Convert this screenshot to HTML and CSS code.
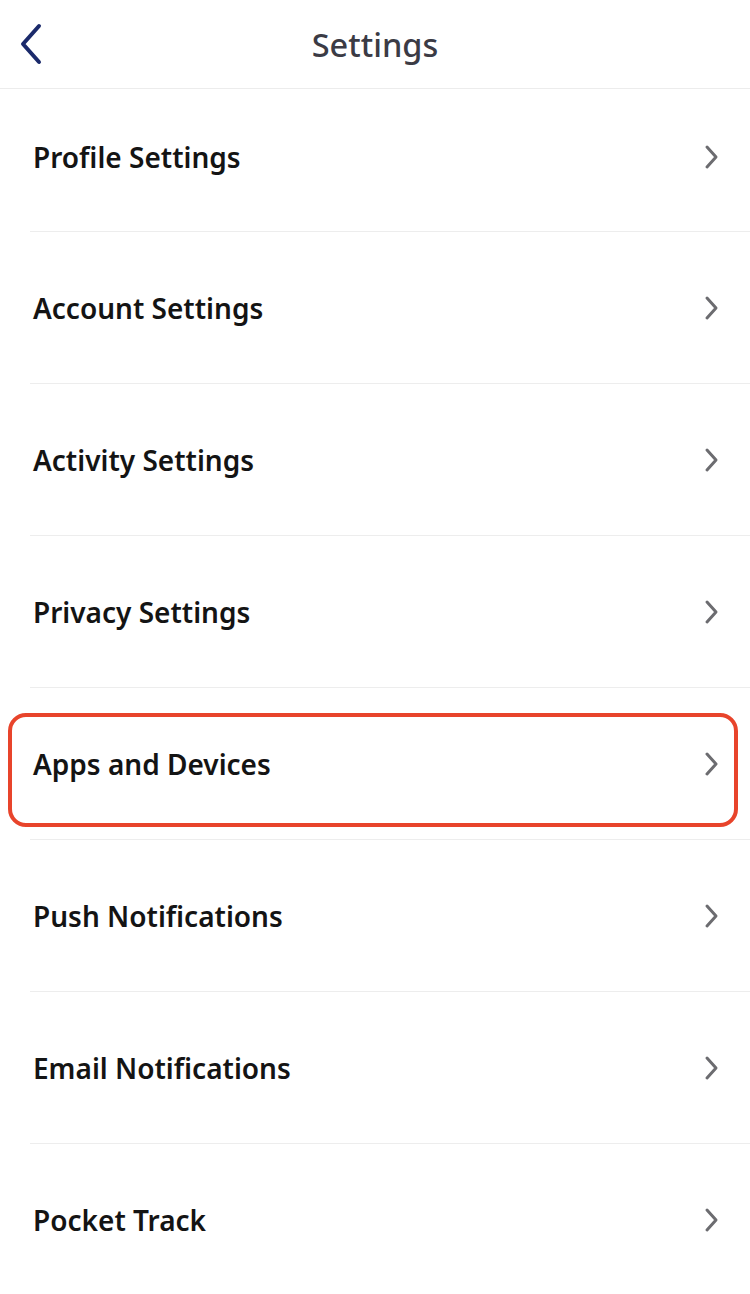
FILE: index.html
```html
<!DOCTYPE html>
<html lang="en">
<head>
<meta charset="utf-8">
<title>Settings</title>
<link rel="stylesheet" href="styles.css">
</head>
<body>
<div class="screen">
  <header class="topbar">
    <button class="back" aria-label="Back">
      <svg width="28" height="44" viewBox="0 0 28 44"><path d="M23 4 L7 22 L23 40" fill="none" stroke="#1b2a6b" stroke-width="4" stroke-linecap="round" stroke-linejoin="round"/></svg>
    </button>
    <h1 class="title">Settings</h1>
  </header>
  <ul class="list">
    <li class="row"><span class="label">Profile Settings</span><svg class="chev" width="16" height="26" viewBox="0 0 16 26"><path d="M3 3 L12 13 L3 23" fill="none" stroke="#6c6c70" stroke-width="3" stroke-linecap="round" stroke-linejoin="round"/></svg></li>
    <li class="row"><span class="label">Account Settings</span><svg class="chev" width="16" height="26" viewBox="0 0 16 26"><path d="M3 3 L12 13 L3 23" fill="none" stroke="#6c6c70" stroke-width="3" stroke-linecap="round" stroke-linejoin="round"/></svg></li>
    <li class="row"><span class="label">Activity Settings</span><svg class="chev" width="16" height="26" viewBox="0 0 16 26"><path d="M3 3 L12 13 L3 23" fill="none" stroke="#6c6c70" stroke-width="3" stroke-linecap="round" stroke-linejoin="round"/></svg></li>
    <li class="row"><span class="label">Privacy Settings</span><svg class="chev" width="16" height="26" viewBox="0 0 16 26"><path d="M3 3 L12 13 L3 23" fill="none" stroke="#6c6c70" stroke-width="3" stroke-linecap="round" stroke-linejoin="round"/></svg></li>
    <li class="row highlighted"><span class="label">Apps and Devices</span><svg class="chev" width="16" height="26" viewBox="0 0 16 26"><path d="M3 3 L12 13 L3 23" fill="none" stroke="#6c6c70" stroke-width="3" stroke-linecap="round" stroke-linejoin="round"/></svg></li>
    <li class="row"><span class="label">Push Notifications</span><svg class="chev" width="16" height="26" viewBox="0 0 16 26"><path d="M3 3 L12 13 L3 23" fill="none" stroke="#6c6c70" stroke-width="3" stroke-linecap="round" stroke-linejoin="round"/></svg></li>
    <li class="row"><span class="label">Email Notifications</span><svg class="chev" width="16" height="26" viewBox="0 0 16 26"><path d="M3 3 L12 13 L3 23" fill="none" stroke="#6c6c70" stroke-width="3" stroke-linecap="round" stroke-linejoin="round"/></svg></li>
    <li class="row"><span class="label">Pocket Track</span><svg class="chev" width="16" height="26" viewBox="0 0 16 26"><path d="M3 3 L12 13 L3 23" fill="none" stroke="#6c6c70" stroke-width="3" stroke-linecap="round" stroke-linejoin="round"/></svg></li>
  </ul>
</div>
</body>
</html>
```

FILE: styles.css
```css
* { box-sizing: border-box; }
html, body { margin: 0; padding: 0; background: #fff; }
body { font-family: "Noto Sans", "Open Sans", sans-serif; }
.screen { width: 750px; min-height: 1294px; background: #fff; }
.topbar {
  position: relative;
  height: 89px;
  border-bottom: 1px solid #ececec;
  display: flex;
  align-items: center;
  justify-content: center;
}
.back {
  position: absolute;
  left: 16px;
  top: 22px;
  padding: 0;
  border: 0;
  background: none;
  display: flex;
}
.title {
  margin: 0;
  font-size: 32.5px;
  font-weight: 500;
  color: #3b3b45;
  line-height: 1;
  padding-top: 2px;
}
.list { list-style: none; margin: 0; padding: 0 0 0 30px; }
.row {
  position: relative;
  height: 152px;
  display: flex;
  align-items: center;
  justify-content: space-between;
  padding: 0 30px 0 3px;
  border-bottom: 1px solid #ededed;
}
.row:first-child { height: 143px; padding-bottom: 7px; }
.row:last-child { border-bottom: 0; }
.label {
  font-size: 28px;
  font-weight: 600;
  color: #141414;
}
.chev { flex: none; }
.highlighted::before {
  content: "";
  position: absolute;
  left: -22px;
  right: 12px;
  top: 25px;
  bottom: 12px;
  border: 4px solid #e8442b;
  border-radius: 18px;
}
```
